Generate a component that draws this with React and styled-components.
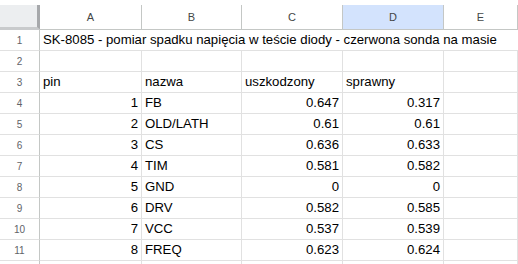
import React from "react";
import styled, { createGlobalStyle } from "styled-components";

const Global = createGlobalStyle`
  html, body { margin: 0; padding: 0; background: #fff; }
  body { font-family: "Liberation Sans", Arial, sans-serif; }
`;

const Sheet = styled.div`
  width: 518px;
  height: 264px;
  overflow: hidden;
  padding-top: 5px;
  box-sizing: border-box;
  display: grid;
  grid-template-columns: 40px 102px 100px 101px 101px 1fr;
  grid-auto-rows: 21px;
  grid-template-rows: 25px;
  font-family: "Liberation Sans", Arial, sans-serif;
`;

const Corner = styled.div`
  background: #eceef0;
  border-right: 4px solid #a6a8ab;
  border-bottom: 3px solid #c8cacc;
  box-sizing: border-box;
  margin-right: -1px;
`;

const ColHead = styled.div`
  display: flex;
  align-items: center;
  justify-content: center;
  font-size: 11px;
  color: #444746;
  background: ${(p) => (p.$active ? "#d3e3fd" : "#fff")};
  border-right: 1px solid #c4c7c5;
  border-bottom: 1px solid #c4c7c5;
  box-sizing: border-box;
`;

const RowHead = styled.div`
  display: flex;
  align-items: center;
  justify-content: center;
  font-size: 10px;
  color: #5f6368;
  border-right: 1px solid #c4c7c5;
  border-bottom: 1px solid #e1e1e1;
  box-sizing: border-box;
  padding-top: 1px;
`;

const Cell = styled.div`
  display: flex;
  align-items: flex-end;
  justify-content: ${(p) => (p.$num ? "flex-end" : "flex-start")};
  padding: 0 3px 2px 3px;
  font-size: 13.2px;
  line-height: 16px;
  color: #000;
  white-space: nowrap;
  border-right: 1px solid #e1e1e1;
  border-bottom: 1px solid #e1e1e1;
  box-sizing: border-box;
  overflow: visible;
`;

const Title = styled(Cell)`
  grid-column: 2 / -1;
  border-right: none;
`;

const cols = ["A", "B", "C", "D", "E"];

const rows = [
  [1, "FB", "0.647", "0.317"],
  [2, "OLD/LATH", "0.61", "0.61"],
  [3, "CS", "0.636", "0.633"],
  [4, "TIM", "0.581", "0.582"],
  [5, "GND", "0", "0"],
  [6, "DRV", "0.582", "0.585"],
  [7, "VCC", "0.537", "0.539"],
  [8, "FREQ", "0.623", "0.624"],
];

export default function App() {
  return (
    <>
      <Global />
      <Sheet>
        <Corner />
        {cols.map((c) => (
          <ColHead key={c} $active={c === "D"}>{c}</ColHead>
        ))}

        <RowHead>1</RowHead>
        <Title>SK-8085 - pomiar spadku napięcia w teście diody - czerwona sonda na masie</Title>

        <RowHead>2</RowHead>
        <Cell /><Cell /><Cell /><Cell /><Cell />

        <RowHead>3</RowHead>
        <Cell>pin</Cell>
        <Cell>nazwa</Cell>
        <Cell>uszkodzony</Cell>
        <Cell>sprawny</Cell>
        <Cell />

        {rows.map((r, i) => (
          <React.Fragment key={i}>
            <RowHead>{i + 4}</RowHead>
            <Cell $num>{r[0]}</Cell>
            <Cell>{r[1]}</Cell>
            <Cell $num>{r[2]}</Cell>
            <Cell $num>{r[3]}</Cell>
            <Cell />
          </React.Fragment>
        ))}

        <RowHead />
        <Cell /><Cell /><Cell /><Cell /><Cell />
      </Sheet>
    </>
  );
}
